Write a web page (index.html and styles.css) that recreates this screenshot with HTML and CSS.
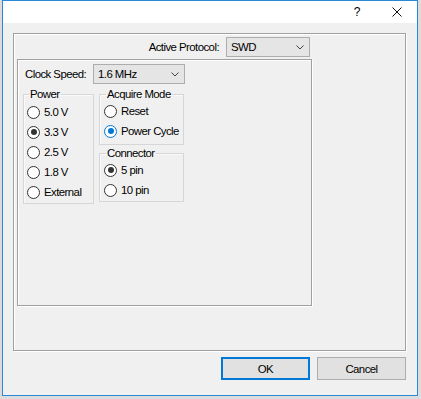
FILE: index.html
```html
<!DOCTYPE html>
<html>
<head>
<meta charset="utf-8">
<link rel="stylesheet" href="styles.css">
</head>
<body>
<div class="window">
  <div class="titlebar">
    <span class="tb-btn help">?</span>
    <span class="tb-btn close">
      <svg width="10" height="10" viewBox="0 0 10 10"><path d="M0.5 0.5 L9.5 9.5 M9.5 0.5 L0.5 9.5" stroke="#111" stroke-width="1" fill="none"/></svg>
    </span>
  </div>
  <div class="content">
    <div class="outer-box">
      <div class="protocol-row">
        <span class="label">Active Protocol:</span>
        <div class="select sel-protocol"><span>SWD</span><svg class="chev" width="8" height="5" viewBox="0 0 8 5"><path d="M0.5 0.5 L4 4 L7.5 0.5" stroke="#444" fill="none"/></svg></div>
      </div>
      <div class="inner-box">
        <div class="clock-row">
          <span class="label clock-label">Clock Speed:</span>
          <div class="select sel-clock"><span>1.6 MHz</span><svg class="chev" width="8" height="5" viewBox="0 0 8 5"><path d="M0.5 0.5 L4 4 L7.5 0.5" stroke="#444" fill="none"/></svg></div>
        </div>
        <div class="groups">
          <fieldset class="group power">
            <legend>Power</legend>
            <div class="radio"><span class="dot"></span>5.0 V</div>
            <div class="radio"><span class="dot on"></span>3.3 V</div>
            <div class="radio"><span class="dot"></span>2.5 V</div>
            <div class="radio"><span class="dot"></span>1.8 V</div>
            <div class="radio"><span class="dot"></span>External</div>
          </fieldset>
          <div class="right-col">
            <fieldset class="group acquire">
              <legend>Acquire Mode</legend>
              <div class="radio"><span class="dot"></span>Reset</div>
              <div class="radio"><span class="dot on blue"></span>Power Cycle</div>
            </fieldset>
            <fieldset class="group connector">
              <legend>Connector</legend>
              <div class="radio"><span class="dot on"></span>5 pin</div>
              <div class="radio"><span class="dot"></span>10 pin</div>
            </fieldset>
          </div>
        </div>
      </div>
    </div>
    <div class="buttons">
      <div class="btn default">OK</div>
      <div class="btn">Cancel</div>
    </div>
  </div>
</div>
</body>
</html>
```
FILE: styles.css
```css
html, body {
  margin: 0;
  padding: 0;
}
body {
  width: 421px;
  height: 399px;
  background: #dcdcdc;
  font-family: "Liberation Sans", Arial, sans-serif;
  font-size: 11.4px;
  letter-spacing: -0.55px;
  color: #000;
  overflow: hidden;
}
.window {
  margin-left: 2px;
  width: 416px;
  height: 396px;
  box-sizing: border-box;
  border: 1px solid #2b87d8;
  background: #f0f0f0;
  display: flex;
  flex-direction: column;
}
.titlebar {
  height: 22px;
  background: #fff;
  display: flex;
  justify-content: flex-end;
  align-items: center;
}
.tb-btn {
  width: 40px;
  display: flex;
  justify-content: center;
  align-items: center;
}
.help {
  font-size: 12px;
  letter-spacing: 0;
}
.close {
  margin-right: 0;
}
.content {
  padding: 10px 11px 0 10px;
  display: flex;
  flex-direction: column;
}
.outer-box {
  height: 318px;
  box-sizing: border-box;
  border: 1px solid #a0a0a0;
  box-shadow: inset 1px 1px 0 #fff, 1px 1px 0 #fff;
  padding: 3px 0 0 3px;
}
.protocol-row {
  width: 295px;
  height: 20px;
  display: flex;
  justify-content: flex-end;
  align-items: center;
  gap: 7px;
  padding-right: 2px;
  box-sizing: border-box;
}
.select {
  height: 20px;
  box-sizing: border-box;
  border: 1px solid #adadad;
  background: #e5e5e5;
  display: flex;
  align-items: center;
  justify-content: space-between;
  padding: 0 5px 0 4px;
}
.sel-protocol { width: 84px; }
.sel-clock { width: 92px; }
.chev { display: block; }
.inner-box {
  margin-top: 2px;
  width: 295px;
  height: 247px;
  box-sizing: border-box;
  border: 1px solid #a0a0a0;
  box-shadow: inset 1px 1px 0 #fff, 1px 1px 0 #fff;
  padding: 4px 0 0 5px;
}
.clock-row {
  display: flex;
  align-items: center;
  height: 20px;
}
.clock-label {
  margin-left: 2px;
  width: 68px;
}
.groups {
  margin-top: 4px;
  display: flex;
  gap: 5px;
  align-items: flex-start;
}
.group {
  margin: 0;
  border: 1px solid #d6d6d6;
  box-shadow: inset 1px 1px 0 #fafafa;
  min-width: 0;
}
.group legend {
  padding: 0 1px;
  margin-left: 2px;
  line-height: 13px;
}
.power {
  width: 71px;
  box-sizing: border-box;
  padding: 1px 0 1px 3px;
}
.right-col {
  display: flex;
  flex-direction: column;
  gap: 2px;
}
.acquire, .connector {
  width: 85px;
  box-sizing: border-box;
  padding: 0 0 3px 4px;
}
.connector {
  padding-bottom: 1px;
}
.radio {
  height: 20px;
  display: flex;
  align-items: center;
}
.dot {
  width: 13px;
  height: 13px;
  box-sizing: border-box;
  border: 1px solid #333;
  border-radius: 50%;
  background: #fff;
  margin-right: 4px;
  display: flex;
  justify-content: center;
  align-items: center;
}
.dot.on::after {
  content: "";
  width: 6px;
  height: 6px;
  border-radius: 50%;
  background: #333;
}
.dot.blue {
  border-color: #0078d7;
}
.dot.blue::after {
  background: #0078d7;
}
.buttons {
  margin-top: 6px;
  display: flex;
  justify-content: flex-end;
  gap: 7px;
}
.btn {
  width: 89px;
  height: 23px;
  box-sizing: border-box;
  border: 1px solid #adadad;
  background: #e1e1e1;
  display: flex;
  justify-content: center;
  align-items: center;
}
.btn.default {
  border: 1px solid #0078d7;
  box-shadow: inset 0 0 0 1px #0078d7;
}
```
